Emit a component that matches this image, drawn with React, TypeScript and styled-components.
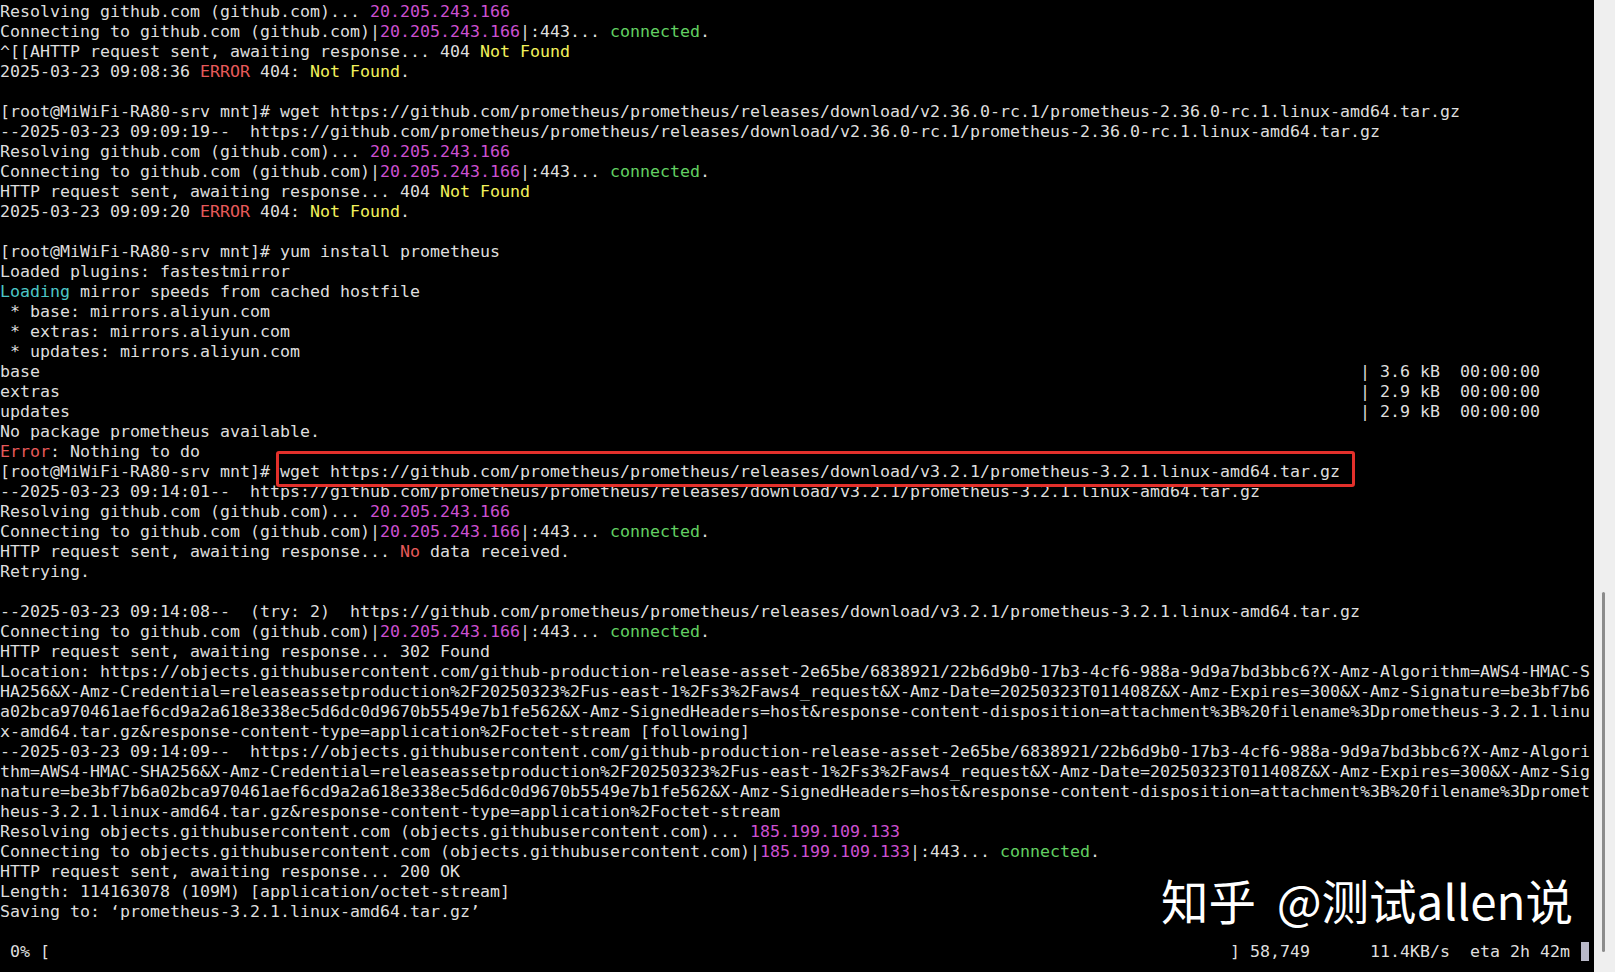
import * as React from 'react'
import styled, { createGlobalStyle } from 'styled-components'

const GlobalStyle = createGlobalStyle`
  html,
  body {
    margin: 0;
    padding: 0;
    background: #000;
  }

  body {
    overflow: hidden;
  }
`

const TONES = {
  text: '#dedede',
  ip: '#cc50d0',
  ok: '#62d062',
  warn: '#f2f25c',
  err: '#e65a5a',
  info: '#4cc6c6',
}

type Tone = keyof typeof TONES
type Part = string | [string, Tone] | { mark: string }

const Screen = styled.div`
  display: flex;
  width: 1615px;
  height: 972px;
  overflow: hidden;
`

const Terminal = styled.div`
  position: relative;
  flex: 0 0 1594px;
  padding-top: 2px;
  background: #000;
  color: ${TONES.text};
  font-family: 'DejaVu Sans Mono', 'Liberation Mono', monospace;
  font-size: 16.61px;
`

const Line = styled.div`
  height: 20px;
  line-height: 20px;
  white-space: pre;
`

const Seg = styled.span<{ $tone: Tone }>`
  color: ${(p) => TONES[p.$tone]};
`

// red box drawn round the command, a little wider than the text
const Marked = styled.span`
  position: relative;
  display: inline-block;
  height: 20px;

  &::after {
    content: '';
    position: absolute;
    left: -4px;
    right: -15px;
    top: -11px;
    bottom: -5px;
    border: 3px solid #e3302b;
    border-radius: 3px;
  }
`

const Cursor = styled.span`
  display: inline-block;
  width: 8px;
  height: 19px;
  margin-left: 1px;
  vertical-align: top;
  background: #b9b9c8;
`

const Watermark = styled.div`
  position: absolute;
  left: 1161px;
  top: 876px;
  color: #fff;
  font-family: 'Noto Sans CJK SC', 'Noto Sans', sans-serif;
  font-size: 47.5px;
  line-height: 1;
  word-spacing: 10px;
  white-space: nowrap;
`

const ScrollTrack = styled.div`
  flex: 1;
  display: flex;
  flex-direction: column;
  justify-content: flex-end;
  padding: 0 0 20px 8px;
  background: #efefef;
`

const ScrollThumb = styled.div`
  width: 3px;
  height: 360px;
  border-radius: 2px;
  background: #8c8c8c;
`

const IP = '20.205.243.166'
const OBJ_IP = '185.199.109.133'
const OLD_URL =
  'https://github.com/prometheus/prometheus/releases/download/v2.36.0-rc.1/prometheus-2.36.0-rc.1.linux-amd64.tar.gz'
const NEW_URL = 'https://github.com/prometheus/prometheus/releases/download/v3.2.1/prometheus-3.2.1.linux-amd64.tar.gz'
const PROMPT = '[root@MiWiFi-RA80-srv mnt]# '

const resolving: Part[] = ['Resolving github.com (github.com)... ', [IP, 'ip']]
const connecting: Part[] = ['Connecting to github.com (github.com)|', [IP, 'ip'], '|:443... ', ['connected', 'ok'], '.']
const repoRow = (name: string, size: string): Part[] => [name.padEnd(136) + '| ' + size + ' kB  00:00:00']

const LINES: Part[][] = [
  resolving,
  connecting,
  ['^[[AHTTP request sent, awaiting response... 404 ', ['Not Found', 'warn']],
  ['2025-03-23 09:08:36 ', ['ERROR', 'err'], ' 404: ', ['Not Found', 'warn'], '.'],
  [],
  [PROMPT + 'wget ' + OLD_URL],
  ['--2025-03-23 09:09:19--  ' + OLD_URL],
  resolving,
  connecting,
  ['HTTP request sent, awaiting response... 404 ', ['Not Found', 'warn']],
  ['2025-03-23 09:09:20 ', ['ERROR', 'err'], ' 404: ', ['Not Found', 'warn'], '.'],
  [],
  [PROMPT + 'yum install prometheus'],
  ['Loaded plugins: fastestmirror'],
  [['Loading', 'info'], ' mirror speeds from cached hostfile'],
  [' * base: mirrors.aliyun.com'],
  [' * extras: mirrors.aliyun.com'],
  [' * updates: mirrors.aliyun.com'],
  repoRow('base', '3.6'),
  repoRow('extras', '2.9'),
  repoRow('updates', '2.9'),
  ['No package prometheus available.'],
  [['Error', 'err'], ': Nothing to do'],
  [PROMPT, { mark: 'wget ' + NEW_URL }],
  ['--2025-03-23 09:14:01--  ' + NEW_URL],
  resolving,
  connecting,
  ['HTTP request sent, awaiting response... ', ['No', 'err'], ' data received.'],
  ['Retrying.'],
  [],
  ['--2025-03-23 09:14:08--  (try: 2)  ' + NEW_URL],
  connecting,
  ['HTTP request sent, awaiting response... 302 Found'],
  [
    'Location: https://objects.githubusercontent.com/github-production-release-asset-2e65be/6838921/22b6d9b0-17b3-4cf6-988a-9d9a7bd3bbc6?X-Amz-Algorithm=AWS4-HMAC-S',
  ],
  [
    'HA256&X-Amz-Credential=releaseassetproduction%2F20250323%2Fus-east-1%2Fs3%2Faws4_request&X-Amz-Date=20250323T011408Z&X-Amz-Expires=300&X-Amz-Signature=be3bf7b6',
  ],
  [
    'a02bca970461aef6cd9a2a618e338ec5d6dc0d9670b5549e7b1fe562&X-Amz-SignedHeaders=host&response-content-disposition=attachment%3B%20filename%3Dprometheus-3.2.1.linu',
  ],
  ['x-amd64.tar.gz&response-content-type=application%2Foctet-stream [following]'],
  [
    '--2025-03-23 09:14:09--  https://objects.githubusercontent.com/github-production-release-asset-2e65be/6838921/22b6d9b0-17b3-4cf6-988a-9d9a7bd3bbc6?X-Amz-Algori',
  ],
  [
    'thm=AWS4-HMAC-SHA256&X-Amz-Credential=releaseassetproduction%2F20250323%2Fus-east-1%2Fs3%2Faws4_request&X-Amz-Date=20250323T011408Z&X-Amz-Expires=300&X-Amz-Sig',
  ],
  [
    'nature=be3bf7b6a02bca970461aef6cd9a2a618e338ec5d6dc0d9670b5549e7b1fe562&X-Amz-SignedHeaders=host&response-content-disposition=attachment%3B%20filename%3Dpromet',
  ],
  ['heus-3.2.1.linux-amd64.tar.gz&response-content-type=application%2Foctet-stream'],
  ['Resolving objects.githubusercontent.com (objects.githubusercontent.com)... ', [OBJ_IP, 'ip']],
  [
    'Connecting to objects.githubusercontent.com (objects.githubusercontent.com)|',
    [OBJ_IP, 'ip'],
    '|:443... ',
    ['connected', 'ok'],
    '.',
  ],
  ['HTTP request sent, awaiting response... 200 OK'],
  ['Length: 114163078 (109M) [application/octet-stream]'],
  ['Saving to: \u2018prometheus-3.2.1.linux-amd64.tar.gz\u2019'],
  [],
]

const PROGRESS = ' 0% ['.padEnd(123) + '] 58,749      11.4KB/s  eta 2h 42m '

const renderPart = (part: Part, i: number) => {
  if (typeof part === 'string') return <React.Fragment key={i}>{part}</React.Fragment>
  if (Array.isArray(part))
    return (
      <Seg key={i} $tone={part[1]}>
        {part[0]}
      </Seg>
    )
  return <Marked key={i}>{part.mark}</Marked>
}

export default function App() {
  return (
    <>
      <GlobalStyle />
      <Screen>
        <Terminal>
          {LINES.map((parts, i) => (
            <Line key={i}>{parts.length ? parts.map(renderPart) : ' '}</Line>
          ))}
          <Line>
            {PROGRESS}
            <Cursor />
          </Line>
          <Watermark>知乎 @测试allen说</Watermark>
        </Terminal>
        <ScrollTrack>
          <ScrollThumb />
        </ScrollTrack>
      </Screen>
    </>
  )
}
